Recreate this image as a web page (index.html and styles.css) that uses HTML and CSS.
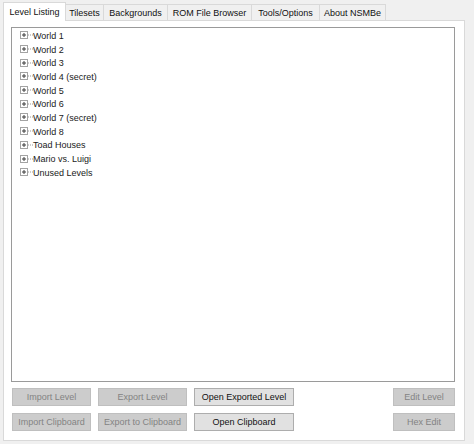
FILE: index.html
```html
<!DOCTYPE html>
<html>
<head>
<meta charset="utf-8">
<link rel="stylesheet" href="styles.css">
</head>
<body>
<div class="window">
  <div class="tabs">
    <div class="tab selected">Level Listing</div>
    <div class="tab">Tilesets</div>
    <div class="tab">Backgrounds</div>
    <div class="tab">ROM File Browser</div>
    <div class="tab">Tools/Options</div>
    <div class="tab">About NSMBe</div>
  </div>
  <div class="panel">
    <div class="tree">
      <div class="node"><svg class="exp" width="13" height="9" viewBox="0 0 13 9"><rect x="0.5" y="0.5" width="7" height="7" fill="#fff" stroke="#a3a3a3"/><path d="M2 4h4M4 2v4" stroke="#3c3c3c"/><path d="M8 4h5" stroke="#9a9a9a" stroke-dasharray="1 1"/></svg><span>World 1</span></div>
      <div class="node"><svg class="exp" width="13" height="9" viewBox="0 0 13 9"><rect x="0.5" y="0.5" width="7" height="7" fill="#fff" stroke="#a3a3a3"/><path d="M2 4h4M4 2v4" stroke="#3c3c3c"/><path d="M8 4h5" stroke="#9a9a9a" stroke-dasharray="1 1"/></svg><span>World 2</span></div>
      <div class="node"><svg class="exp" width="13" height="9" viewBox="0 0 13 9"><rect x="0.5" y="0.5" width="7" height="7" fill="#fff" stroke="#a3a3a3"/><path d="M2 4h4M4 2v4" stroke="#3c3c3c"/><path d="M8 4h5" stroke="#9a9a9a" stroke-dasharray="1 1"/></svg><span>World 3</span></div>
      <div class="node"><svg class="exp" width="13" height="9" viewBox="0 0 13 9"><rect x="0.5" y="0.5" width="7" height="7" fill="#fff" stroke="#a3a3a3"/><path d="M2 4h4M4 2v4" stroke="#3c3c3c"/><path d="M8 4h5" stroke="#9a9a9a" stroke-dasharray="1 1"/></svg><span>World 4 (secret)</span></div>
      <div class="node"><svg class="exp" width="13" height="9" viewBox="0 0 13 9"><rect x="0.5" y="0.5" width="7" height="7" fill="#fff" stroke="#a3a3a3"/><path d="M2 4h4M4 2v4" stroke="#3c3c3c"/><path d="M8 4h5" stroke="#9a9a9a" stroke-dasharray="1 1"/></svg><span>World 5</span></div>
      <div class="node"><svg class="exp" width="13" height="9" viewBox="0 0 13 9"><rect x="0.5" y="0.5" width="7" height="7" fill="#fff" stroke="#a3a3a3"/><path d="M2 4h4M4 2v4" stroke="#3c3c3c"/><path d="M8 4h5" stroke="#9a9a9a" stroke-dasharray="1 1"/></svg><span>World 6</span></div>
      <div class="node"><svg class="exp" width="13" height="9" viewBox="0 0 13 9"><rect x="0.5" y="0.5" width="7" height="7" fill="#fff" stroke="#a3a3a3"/><path d="M2 4h4M4 2v4" stroke="#3c3c3c"/><path d="M8 4h5" stroke="#9a9a9a" stroke-dasharray="1 1"/></svg><span>World 7 (secret)</span></div>
      <div class="node"><svg class="exp" width="13" height="9" viewBox="0 0 13 9"><rect x="0.5" y="0.5" width="7" height="7" fill="#fff" stroke="#a3a3a3"/><path d="M2 4h4M4 2v4" stroke="#3c3c3c"/><path d="M8 4h5" stroke="#9a9a9a" stroke-dasharray="1 1"/></svg><span>World 8</span></div>
      <div class="node"><svg class="exp" width="13" height="9" viewBox="0 0 13 9"><rect x="0.5" y="0.5" width="7" height="7" fill="#fff" stroke="#a3a3a3"/><path d="M2 4h4M4 2v4" stroke="#3c3c3c"/><path d="M8 4h5" stroke="#9a9a9a" stroke-dasharray="1 1"/></svg><span>Toad Houses</span></div>
      <div class="node"><svg class="exp" width="13" height="9" viewBox="0 0 13 9"><rect x="0.5" y="0.5" width="7" height="7" fill="#fff" stroke="#a3a3a3"/><path d="M2 4h4M4 2v4" stroke="#3c3c3c"/><path d="M8 4h5" stroke="#9a9a9a" stroke-dasharray="1 1"/></svg><span>Mario vs. Luigi</span></div>
      <div class="node"><svg class="exp" width="13" height="9" viewBox="0 0 13 9"><rect x="0.5" y="0.5" width="7" height="7" fill="#fff" stroke="#a3a3a3"/><path d="M2 4h4M4 2v4" stroke="#3c3c3c"/><path d="M8 4h5" stroke="#9a9a9a" stroke-dasharray="1 1"/></svg><span>Unused Levels</span></div>
    </div>
    <div class="buttons">
      <div class="btn disabled b1">Import Level</div>
      <div class="btn disabled b2">Export Level</div>
      <div class="btn b3">Open Exported Level</div>
      <div class="btn disabled b5">Edit Level</div>
      <div class="btn disabled b1">Import Clipboard</div>
      <div class="btn disabled b2">Export to Clipboard</div>
      <div class="btn b3">Open Clipboard</div>
      <div class="btn disabled b5">Hex Edit</div>
    </div>
  </div>
</div>
</body>
</html>
```

FILE: styles.css
```css
* { box-sizing: border-box; }
html, body {
  margin: 0;
  padding: 0;
  background: #f0f0f0;
}
body {
  font-family: "Liberation Sans", Arial, sans-serif;
  font-size: 9px;
  color: #111;
  width: 474px;
  height: 444px;
  overflow: hidden;
}
.window {
  padding-top: 2px;
  padding-left: 3px;
}
.tabs {
  display: flex;
  align-items: flex-end;
  height: 18px;
  position: relative;
  z-index: 1;
}
.tab {
  height: 16px;
  border: 1px solid #d9d9d9;
  border-bottom: none;
  border-left: none;
  background: #f0f0f0;
  display: flex;
  align-items: center;
  justify-content: center;
  white-space: nowrap;
  padding-top: 1px;
}
.tab.selected {
  height: 19px;
  margin-bottom: -1px;
  background: #fff;
  border-left: 1px solid #d9d9d9;
  padding-bottom: 2px;
}
.tab:nth-child(1) { width: 63px; }
.tab:nth-child(2) { width: 38px; }
.tab:nth-child(3) { width: 64px; }
.tab:nth-child(4) { width: 84px; }
.tab:nth-child(5) { width: 68px; }
.tab:nth-child(6) { width: 66px; }

.panel {
  width: 462px;
  height: 421px;
  background: #fff;
  border: 1px solid #d9d9d9;
  padding: 6px 0 0 7px;
}
.tree {
  width: 444px;
  height: 355px;
  border: 1px solid #9a9a9a;
  background: #fff;
  padding: 1px 0 0 8px;
}
.node {
  height: 13.7px;
  display: flex;
  align-items: center;
  white-space: nowrap;
}
.exp {
  display: block;
  flex: none;
  margin-right: 0;
}
.node span {
  padding-left: 0;
  line-height: 12px;
  color: #1a1a1a;
}
.buttons {
  margin-top: 6px;
  display: grid;
  grid-template-columns: 79px 89px 100px 1fr 62px;
  grid-template-rows: 18px 18px;
  column-gap: 7px;
  row-gap: 7px;
  width: 444px;
  padding-left: 1px;
}
.btn {
  display: flex;
  align-items: center;
  justify-content: center;
  white-space: nowrap;
  background: #e1e1e1;
  border: 1px solid #adadad;
  color: #111;
}
.btn.disabled {
  background: #cccccc;
  border-color: #bfbfbf;
  color: #838383;
}
.b1 { grid-column: 1; }
.b2 { grid-column: 2; }
.b3 { grid-column: 3; }
.b5 { grid-column: 5; }
```
